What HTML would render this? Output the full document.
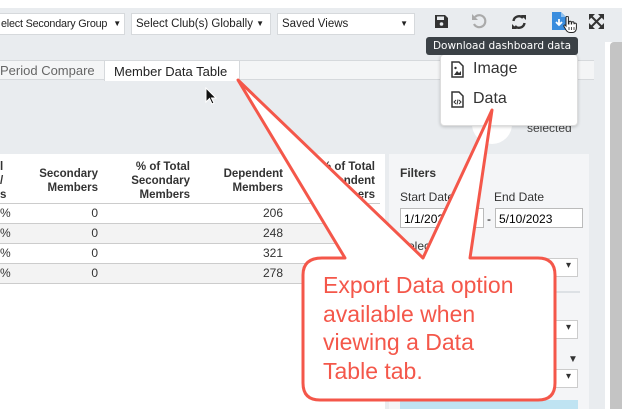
<!DOCTYPE html>
<html><head><style>
*{box-sizing:border-box;margin:0;padding:0}
body{width:622px;height:409px;overflow:hidden;position:relative;background:#fff;font-family:"Liberation Sans",Arial,sans-serif;}
.a{position:absolute;white-space:nowrap}
.dd{position:absolute;top:13px;height:22px;background:#fff;border:1px solid #d6d9dc;font-size:11.5px;color:#222;line-height:20px;padding-left:4px;white-space:nowrap;overflow:hidden}
.dd b{position:absolute;right:6px;top:0;font-size:8px;font-weight:normal}
.th{position:absolute;font-size:11.5px;font-weight:bold;color:#333;text-align:right;line-height:14px}
.td{position:absolute;font-size:12px;color:#333;text-align:right;line-height:20px}
.sel{position:absolute;left:400px;width:178px;height:19px;background:#fff;border:1px solid #ccc}
.sel:after{content:"▾";position:absolute;right:6px;top:1px;font-size:10px;color:#333}
</style></head><body>
<div class="a" style="left:0;top:8px;width:622px;height:401px;background:#e9ecef"></div>
<div class="dd" style="left:-2px;width:127px;font-size:10.8px;letter-spacing:-0.2px;padding-left:2px">elect Secondary Group<b style="right:3px;background:#fff;padding-left:2px">▼</b></div>
<div class="dd" style="left:131px;width:140px">Select Club(s) Globally<b style="background:#fff;padding-left:2px">▼</b></div>
<div class="dd" style="left:277px;width:138px">Saved Views<b>▼</b></div>
<!-- icons -->
<svg class="a" style="left:434px;top:14px" width="15" height="15" viewBox="0 0 15 15"><path d="M1 1h10l3 3v10H1z" fill="#333"/><rect x="3" y="2.5" width="7" height="3.5" fill="#e9ecef"/><circle cx="7.5" cy="10" r="1.8" fill="#e9ecef"/></svg>
<svg class="a" style="left:471px;top:13px" width="16" height="17" viewBox="0 0 16 17"><path d="M4 4 A6 6 0 1 1 3 11" fill="none" stroke="#aaa" stroke-width="2.2"/><path d="M1 1v6h6z" fill="#aaa"/></svg>
<svg class="a" style="left:511px;top:14px" width="16" height="16" viewBox="0 0 16 16"><path d="M2.5 7A5.5 5.5 0 0 1 12 4M13.5 9A5.5 5.5 0 0 1 4 12" fill="none" stroke="#333" stroke-width="2.4"/><path d="M10 1h5v5zM6 15H1v-5z" fill="#333"/></svg>
<svg class="a" style="left:552px;top:12px" width="14" height="18" viewBox="0 0 14 18"><path d="M0 0h9l5 5v13H0z" fill="#3a8dde"/><path d="M9 0v5h5" fill="#8fc0ee"/><path d="M7 7v6M4 10l3 3 3-3" stroke="#fff" stroke-width="1.8" fill="none"/></svg>
<svg class="a" style="left:563px;top:16px" width="14" height="17" viewBox="0 0 14 17"><path d="M3 1.5a1.2 1.2 0 0 1 2.4 0V8h.5V6.5a1.2 1.2 0 0 1 2.4 0V8h.3V7a1.2 1.2 0 0 1 2.4 0v1.3a1.2 1.2 0 0 1 2.4 0V12c0 2.5-1.5 4.5-4 4.5H7c-2 0-3-1-4-2.5L1 10.5c-.6-1 .6-2 1.4-1.2L3 10z" fill="#fff" stroke="#222" stroke-width="1"/><path d="M6 11v3M8.5 11v3M11 11v3" stroke="#222" stroke-width=".8"/></svg>
<svg class="a" style="left:589px;top:14px" width="15" height="15" viewBox="0 0 15 15"><path d="M2 2l11 11M13 2L2 13" stroke="#333" stroke-width="2"/><path d="M0 0h6L0 6zM15 0v6L9 0zM0 15V9l6 6zM15 15H9l6-6z" fill="#333"/></svg>
<!-- tabs -->
<div class="a" style="left:0;top:60px;width:594px;height:20px;background:#f4f5f6;border-top:1px solid #d6d9dc;border-bottom:1px solid #d6d9dc"></div>
<div class="a" style="left:0;top:63px;font-size:13px;color:#666">Period Compare</div>
<div class="a" style="left:104px;top:60px;width:136px;height:21px;background:#fff;border:1px solid #d6d9dc;border-bottom:none;font-size:13px;color:#222;padding:3px 0 0 9px">Member Data Table</div>
<svg class="a" style="left:205px;top:87px" width="12" height="18" viewBox="0 0 12 18"><path d="M1 1v14l3.5-3.5 2.5 5.5 2-1-2.5-5H11z" fill="#111" stroke="#fff" stroke-width="1"/></svg>
<!-- scrollbar -->
<div class="a" style="left:605px;top:42px;width:17px;height:367px;background:#fff"></div>
<div class="a" style="left:610px;top:42px;width:12px;height:367px;background:#c4c4c4;border-radius:4px 0 0 0"></div>
<!-- selected bubble -->
<div class="a" style="left:472px;top:104px;width:40px;height:40px;border-radius:50%;background:#fff"></div>
<div class="a" style="left:527px;top:121px;font-size:12px;color:#444">selected</div>
<!-- table -->
<div class="a" style="left:0;top:154px;width:385px;height:255px;background:#fff"></div>
<div class="th" style="left:0;top:160px;width:8px;text-align:left">l<br>/<br>s</div>
<div class="th" style="left:20px;top:167px;width:78px">Secondary<br>Members</div>
<div class="th" style="left:100px;top:160px;width:90px">% of Total<br>Secondary<br>Members</div>
<div class="th" style="left:200px;top:167px;width:83px">Dependent<br>Members</div>
<div class="th" style="left:290px;top:160px;width:85px">% of Total<br>Dependent<br>Members</div>
<div class="a" style="left:0;top:203px;width:380px;height:1px;background:#ccc"></div>
<div class="a" style="left:0;top:223px;width:380px;height:21px;background:#f3f3f3;border-top:1px solid #ccc;border-bottom:1px solid #ccc"></div>
<div class="a" style="left:0;top:263px;width:380px;height:21px;background:#f3f3f3;border-top:1px solid #ccc;border-bottom:1px solid #ccc"></div>
<div class="td" style="left:0;top:203px;text-align:left">%<br>%<br>%<br>%</div>
<div class="td" style="left:60px;top:203px;width:38px">0<br>0<br>0<br>0</div>
<div class="td" style="left:240px;top:203px;width:43px">206<br>248<br>321<br>278</div>
<div class="td" style="left:360px;top:203px;width:15px">%</div>
<!-- filters -->
<div class="a" style="left:389px;top:154px;width:200px;height:255px;background:#f4f5f7"></div>
<div class="a" style="left:400px;top:166px;font-size:12px;font-weight:bold;color:#333">Filters</div>
<div class="a" style="left:400px;top:190px;font-size:12px;color:#333">Start Date</div>
<div class="a" style="left:494px;top:190px;font-size:12px;color:#333">End Date</div>
<div class="a" style="left:400px;top:208px;width:84px;height:20px;background:#fff;border:1px solid #bbb;font-size:12px;padding:3px 3px">1/1/2023</div>
<div class="a" style="left:487px;top:212px;font-size:12px">-</div>
<div class="a" style="left:495px;top:208px;width:88px;height:20px;background:#fff;border:1px solid #bbb;font-size:12px;padding:3px 3px">5/10/2023</div>
<div class="a" style="left:400px;top:239px;font-size:12px;color:#333">Select</div>
<div class="sel" style="top:258px"></div>
<div class="a" style="left:400px;top:291px;width:180px;height:2px;background:#dde1e5"></div>
<div class="sel" style="top:320px"></div>
<div class="a" style="left:568px;top:354px;font-size:10px;color:#333">▼</div>
<div class="sel" style="top:369px"></div>
<div class="a" style="left:400px;top:400px;width:178px;height:9px;background:#bfe3f2"></div>
<!-- tooltip & menu -->
<div class="a" style="left:440px;top:54px;width:138px;height:72px;background:#fff;border:1px solid #ddd;border-radius:4px;box-shadow:0 1px 3px rgba(0,0,0,.2)"></div>
<div class="a" style="left:426px;top:37px;width:152px;height:18px;background:#3b4146;border-radius:3px;color:#fff;font-size:10.5px;line-height:18px;text-align:center;font-family:'DejaVu Sans',sans-serif">Download dashboard data</div>
<svg class="a" style="left:451px;top:61px" width="13" height="17" viewBox="0 0 13 17"><path d="M1 1h7l4 4v11H1z" fill="none" stroke="#333" stroke-width="1.5"/><path d="M3 14l3-4 2 2 2-2v4z" fill="#333"/><circle cx="4.5" cy="7" r="1.2" fill="#333"/></svg>
<div class="a" style="left:473px;top:60px;font-size:16px;color:#333">Image</div>
<svg class="a" style="left:451px;top:91px" width="13" height="17" viewBox="0 0 13 17"><path d="M1 1h7l4 4v11H1z" fill="none" stroke="#333" stroke-width="1.5"/><path d="M5 9l-2 2 2 2M8 9l2 2-2 2M7 8.5l-1 5" fill="none" stroke="#333" stroke-width="1"/></svg>
<div class="a" style="left:473px;top:90px;font-size:16px;color:#333">Data</div>
<!-- callout -->
<svg class="a" style="left:0;top:0" width="622" height="409" viewBox="0 0 622 409">
<path d="M322 258 H345 L238 80 L423 258 L492 110 L470 258 H538 Q555 258 555 275 V383 Q555 400 538 400 H320 Q303 400 303 383 V275 Q303 258 322 258 Z" fill="#fff" stroke="#f4574a" stroke-width="3" stroke-linejoin="round"/>
</svg>
<div class="a" style="left:323px;top:271px;font-size:23px;line-height:28.5px;color:#f4574a">Export Data option<br>available when<br>viewing a Data<br>Table tab.</div>
</body></html>
